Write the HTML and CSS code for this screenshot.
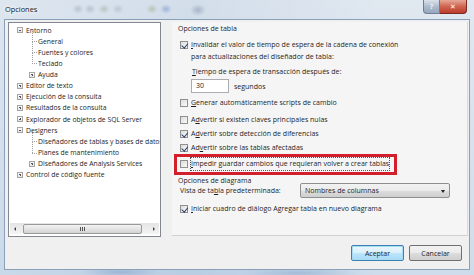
FILE: index.html
```html
<!doctype html>
<html lang="es">
  <head>
    <meta charset="UTF-8" />
    <title>Opciones</title>
    <link rel="stylesheet" href="styles.css">
  </head>
  <body>
    <div class="window">
      <div class="titlebar">
        <span class="title">Opciones</span>
        <div class="caption-btns">
          <span class="cap-btn help">?</span>
          <span class="cap-btn close">&#x2715;</span>
        </div>
      </div>

      <div class="client">
        <div class="main">
          <div class="tree">
            <div class="tree-rows">
              <div class="node lvl0"><span class="exp minus"></span>Entorno</div>
              <div class="node lvl1 branch">General</div>
              <div class="node lvl1 branch">Fuentes y colores</div>
              <div class="node lvl1 branch">Teclado</div>
              <div class="node lvl1 sub"><span class="exp plus"></span>Ayuda</div>
              <div class="node lvl0"><span class="exp plus"></span>Editor de texto</div>
              <div class="node lvl0"><span class="exp plus"></span>Ejecución de la consulta</div>
              <div class="node lvl0"><span class="exp plus"></span>Resultados de la consulta</div>
              <div class="node lvl0"><span class="exp plus"></span>Explorador de objetos de SQL Server</div>
              <div class="node lvl0"><span class="exp minus"></span>Designers</div>
              <div class="node lvl1 branch">Diseñadores de tablas y bases de datos</div>
              <div class="node lvl1 branch">Planes de mantenimiento</div>
              <div class="node lvl1 sub"><span class="exp plus"></span>Diseñadores de Analysis Services</div>
              <div class="node lvl0"><span class="exp plus"></span>Control de código fuente</div>
            </div>
            <div class="hscroll">
              <span class="arrow left"></span>
              <div class="track"><div class="thumb"><span class="grip"></span></div></div>
              <span class="arrow right"></span>
            </div>
          </div>

          <div class="panel">
            <div class="group-title">Opciones de tabla</div>

            <div class="check-row r-invalidar">
              <span class="cb checked"></span>
              <span><u>I</u>nvalidar el valor de tiempo de espera de la cadena de conexión<br>para actualizaciones del diseñador de tabla:</span>
            </div>
            <div class="label-row r-tiempo"><u>T</u>iempo de espera de transacción después de:</div>
            <div class="input-row">
              <span class="textbox">30</span>
              <span>segundos</span>
            </div>

            <div class="check-row r-generar"><span class="cb"></span><span><u>G</u>enerar automáticamente scripts de cambio</span></div>
            <div class="check-row r-claves"><span class="cb"></span><span>A<u>d</u>vertir si existen claves principales nulas</span></div>
            <div class="check-row r-tight"><span class="cb checked"></span><span>A<u>d</u>vertir sobre detección de diferencias</span></div>
            <div class="check-row r-tight"><span class="cb checked"></span><span>Ad<u>v</u>ertir sobre las tablas afectadas</span></div>

            <div class="highlight">
              <div class="check-row"><span class="cb"></span><span class="focus"><u>I</u>mpedir guardar cambios que requieran volver a crear tablas</span></div>
            </div>

            <div class="group-title r-diagrama">Opciones de diagrama</div>
            <div class="combo-row">
              <span>Vista de ta<u>b</u>la predeterminada:</span>
              <div class="combo"><span>Nombres de columnas</span><span class="combo-arrow"></span></div>
            </div>
            <div class="check-row r-iniciar"><span class="cb checked"></span><span><u>I</u>niciar cuadro de diálogo Agregar tabla en nuevo diagrama</span></div>
          </div>
        </div>

        <div class="footer">
          <button class="btn default">Aceptar</button>
          <button class="btn">Cancelar</button>
        </div>
      </div>
    </div>
  </body>
</html>
```

FILE: styles.css
```css
:root {
  --glass: #c2d4e8;
  --face: #f0f0f0;
  --text: #1e1e1e;
  --line: #828790;
}

* {
  margin: 0;
  padding: 0;
  box-sizing: border-box;
}

body {
  width: 474px;
  height: 275px;
  overflow: hidden;
  font-family: 'Open Sans', 'Noto Sans', sans-serif;
  font-size: 7px;
  color: var(--text);
  background: var(--glass);
}

u {
  text-decoration: underline;
  text-underline-offset: 1px;
}

.window {
  width: 474px;
  height: 275px;
  display: flex;
  flex-direction: column;
  background:
    radial-gradient(ellipse 40px 6px at 120px 272px, rgba(90, 130, 180, 0.35), transparent),
    radial-gradient(ellipse 60px 6px at 300px 273px, rgba(90, 130, 180, 0.3), transparent),
    linear-gradient(90deg, rgba(255, 255, 255, 0.25), rgba(255, 255, 255, 0) 40%, rgba(255, 255, 255, 0.3) 80%),
    linear-gradient(180deg, #d3deea, #b9cde3);
}

/* title bar, with the blurred toolbar behind the glass */
.titlebar {
  height: 19px;
  flex: none;
  display: flex;
  align-items: flex-start;
  justify-content: space-between;
  padding: 0 7px 0 5px;
  background:
    radial-gradient(ellipse 6px 5px at 78px 9px, rgba(120, 140, 160, 0.35), transparent),
    radial-gradient(ellipse 6px 5px at 90px 9px, rgba(120, 140, 160, 0.35), transparent),
    radial-gradient(ellipse 6px 5px at 104px 9px, rgba(120, 150, 120, 0.35), transparent),
    radial-gradient(ellipse 6px 5px at 118px 9px, rgba(120, 140, 160, 0.3), transparent),
    radial-gradient(ellipse 6px 5px at 152px 9px, rgba(130, 150, 90, 0.35), transparent),
    radial-gradient(ellipse 6px 5px at 166px 9px, rgba(60, 100, 180, 0.35), transparent),
    radial-gradient(ellipse 8px 6px at 198px 10px, rgba(90, 110, 140, 0.35), transparent);
}

.title {
  margin-top: 4px;
  font-size: 7.4px;
  color: #1b1b1b;
  text-shadow: 0 0 4px #fff, 0 0 6px #fff;
}

.caption-btns {
  display: flex;
}

.cap-btn {
  height: 14px;
  display: flex;
  align-items: center;
  justify-content: center;
  color: #fff;
  font-family: 'DejaVu Sans', sans-serif;
  font-weight: bold;
  border: 1px solid #6d7f95;
  border-top: none;
}

.help {
  width: 17px;
  font-size: 7px;
  color: #e9eef4;
  background: linear-gradient(180deg, #d9e2ec, #a9b8ca 55%, #97a9bf);
  border-radius: 0 0 0 4px;
}

.close {
  width: 27px;
  font-size: 7px;
  background: linear-gradient(180deg, #e6a898, #cf6450 50%, #bd3b2b);
  border-color: #7a2a22;
  border-left: none;
  border-radius: 0 0 4px 0;
}

/* dialog client area */
.client {
  flex: none;
  margin: 0 4px;
  height: 251px;
  background: var(--face);
  border: 1px solid #8aa0b8;
  display: flex;
  flex-direction: column;
}

.main {
  display: flex;
  align-items: flex-start;
  padding: 2px 2px 0 3px;
  gap: 11px;
}

/* tree */
.tree {
  width: 153px;
  height: 215px;
  flex: none;
  background: #fff;
  border: 1px solid var(--line);
  display: flex;
  flex-direction: column;
  justify-content: space-between;
  overflow: hidden;
  font-size: 6.8px;
}

.tree-rows {
  padding-top: 1.5px;
}

.node {
  height: 11.15px;
  line-height: 11.15px;
  white-space: nowrap;
  position: relative;
}

.lvl0 {
  padding-left: 8px;
}

.lvl1 {
  padding-left: 29px;
}

.lvl1.sub {
  padding-left: 20px;
}

.exp {
  display: inline-block;
  width: 6px;
  height: 6px;
  margin-right: 3px;
  border: 1px solid #a6a6a6;
  background: linear-gradient(180deg, #fff, #e3e3e3);
  vertical-align: -0.5px;
  position: relative;
}

.exp::before,
.exp.plus::after {
  content: '';
  position: absolute;
  background: #555;
}

.exp::before {
  left: 1px;
  top: 1.5px;
  width: 2px;
  height: 1px;
}

.exp.plus::after {
  left: 1.5px;
  top: 1px;
  width: 1px;
  height: 2px;
}

.branch::before {
  content: '';
  position: absolute;
  left: 23px;
  top: -5px;
  height: 11px;
  border-left: 1px dotted #a0a0a0;
}

.branch::after {
  content: '';
  position: absolute;
  left: 23px;
  top: 5.5px;
  width: 5px;
  border-top: 1px dotted #a0a0a0;
}

.hscroll {
  height: 11px;
  margin: 0 1px 2px;
  display: flex;
  align-items: center;
  background: linear-gradient(180deg, #e4e4e4, #f4f4f4);
}

.arrow {
  width: 11px;
  height: 11px;
  flex: none;
  position: relative;
}

.arrow::after {
  content: '';
  position: absolute;
  top: 3.5px;
  border: 2px solid transparent;
}

.arrow.left::after {
  left: 2px;
  border-right: 2.5px solid #444;
}

.arrow.right::after {
  right: 2px;
  border-left: 2.5px solid #444;
}

.track {
  flex: 1;
  padding: 0 6px 0 2px;
}

.thumb {
  height: 10px;
  border: 1px solid #9a9a9a;
  border-radius: 2px;
  background: linear-gradient(180deg, #f3f3f3, #e4e4e4 50%, #d2d2d2);
  display: flex;
  align-items: center;
  justify-content: center;
}

.grip {
  width: 5px;
  height: 4px;
  background: repeating-linear-gradient(90deg, #555 0 1px, transparent 1px 2px);
}

/* right panel */
.panel {
  width: 296px;
  height: 214px;
  flex: none;
  background: #f5f5f5;
  border-right: 1px solid #dadada;
  border-bottom: 1px solid #d0d0d0;
  padding: 1px 0 0 6px;
  white-space: nowrap;
}

.group-title {
  height: 12px;
  line-height: 12px;
}

.check-row,
.label-row {
  display: flex;
  align-items: flex-start;
  line-height: 12px;
  padding-left: 2px;
}

.cb {
  width: 8px;
  height: 8px;
  margin: 2px 3px 0 0;
  flex: none;
  border: 1px solid #8f8f8f;
  background: linear-gradient(135deg, #dcdcdc, #fafafa);
  position: relative;
}

.cb.checked::after {
  content: '';
  position: absolute;
  left: 1.5px;
  top: 0;
  width: 2.5px;
  height: 4.5px;
  border: solid #2b3d6a;
  border-width: 0 1.2px 1.2px 0;
  transform: rotate(40deg);
}

.r-invalidar {
  margin-top: 4px;
}

.label-row.r-tiempo {
  margin-top: 3px;
  padding-left: 14px;
}

.input-row {
  margin-top: 1px;
  padding-left: 13px;
  display: flex;
  align-items: center;
  gap: 5px;
  height: 14px;
}

.textbox {
  width: 38px;
  height: 14px;
  line-height: 12px;
  padding-left: 4px;
  background: #fff;
  border: 1px solid #abadb3;
}

.r-generar {
  margin-top: 4px;
}

.r-claves {
  margin-top: 5px;
}

.r-tight {
  margin-top: 2px;
}

.highlight {
  width: 223px;
  height: 21px;
  margin-left: -4px;
  border: 3px solid #d21f2b;
  padding: 1px 0 0 1px;
}

.focus {
  outline: 1px dotted #555;
  outline-offset: 0;
}

.r-diagrama {
  margin-top: 1px;
  height: 10px;
  line-height: 10px;
}

.combo-row {
  margin-top: -3px;
  padding-left: 2px;
  height: 15px;
  display: flex;
  align-items: center;
  justify-content: space-between;
  padding-right: 17px;
}

.combo {
  width: 150px;
  height: 15px;
  border: 1px solid #8e8f8f;
  border-radius: 2px;
  background: linear-gradient(180deg, #f2f2f2, #ebebeb 50%, #dddddd 50%, #cfcfcf);
  display: flex;
  align-items: center;
  justify-content: space-between;
  padding: 0 4px 0 4px;
}

.combo-arrow {
  border: 2.5px solid transparent;
  border-top: 3px solid #222;
  margin-top: 3px;
}

.r-iniciar {
  margin-top: 4.5px;
}

/* buttons */
.footer {
  display: flex;
  justify-content: flex-end;
  gap: 5px;
  padding: 8px 7px 0 0;
}

.btn {
  width: 53px;
  height: 16px;
  font-family: inherit;
  font-size: 7px;
  color: var(--text);
  border: 1px solid #707070;
  border-radius: 2px;
  background: linear-gradient(180deg, #f2f2f2, #ebebeb 50%, #dddddd 50%, #cfcfcf);
}

.btn.default {
  border-color: #3c7fb1;
  box-shadow: inset 0 0 0 1px #a6dcf5;
  background: linear-gradient(180deg, #eaf6fd, #d9f0fc 50%, #bee6fd 50%, #a7d9f5);
}
```
